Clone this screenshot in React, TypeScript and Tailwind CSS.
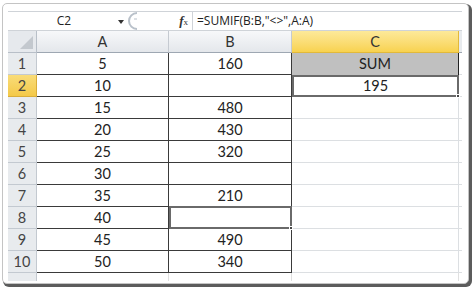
import React from "react";

const colA = ["5", "10", "15", "20", "25", "30", "35", "40", "45", "50"];
const colB = ["160", "", "480", "430", "320", "", "210", "", "490", "340"];

const cellFont = { fontFamily: "Lato, 'Open Sans', sans-serif" };

const App: React.FC = () => {
  return (
    <div className="w-[474px] h-[287px] bg-white pl-[2px] pt-[3px]">
      <div className="w-[467px] h-[281px] bg-white border border-[#c4c4c4] rounded-[5px] shadow-[2px_2px_0_1px_#5c5c5c] pl-[5px] pt-[7px] overflow-hidden">
        {/* Formula bar */}
        <div
          className="flex h-[20px] w-[454px] border-t border-b border-[#cfd3d8] bg-white text-[12px] text-[#222]"
          style={{ fontFamily: "'Open Sans', 'Noto Sans', sans-serif" }}
        >
          <div className="relative w-[120px] flex items-center justify-center">
            <span className="-ml-[8px]">C2</span>
            <span className="absolute right-[4px] top-[8px] w-0 h-0 border-l-[3px] border-r-[3px] border-t-[4px] border-l-transparent border-r-transparent border-t-[#333]" />
          </div>
          <div className="w-[14px] flex items-center">
            <svg width="12" height="18" viewBox="0 0 12 18">
              <path d="M9 1 A8 8 0 0 0 9 17" fill="none" stroke="#b9c1ca" strokeWidth="2" />
              <line x1="6" y1="7" x2="9" y2="7" stroke="#b9c1ca" strokeWidth="1" />
            </svg>
          </div>
          <div className="w-[50px] flex items-center justify-end pr-[4px]">
            <span
              className="italic font-bold text-[13px] text-[#333]"
              style={{ fontFamily: "'Liberation Serif', serif" }}
            >
              f<span className="text-[9px] not-italic font-normal">x</span>
            </span>
          </div>
          <div className="flex-1 border-l border-[#cfd3d8] flex items-center pl-[4px]">
            =SUMIF(B:B,"&lt;&gt;",A:A)
          </div>
        </div>

        {/* Grid */}
        <div
          className="grid grid-cols-[29px_132px_123px_167px_3px] text-[14.5px] text-[#222]"
          style={cellFont}
        >
          {/* Header row */}
          <div className="h-[22px] bg-[#e6e9ed] border-r border-b border-[#b8bfc8] relative">
            <svg className="absolute right-[3px] bottom-[3px]" width="13" height="13" viewBox="0 0 13 13">
              <polygon points="13,0 13,13 0,13" fill="#c3c8ce" />
            </svg>
          </div>
          <div className="h-[22px] bg-gradient-to-b from-[#f7f8fa] to-[#e4e7eb] border-r border-b border-[#c5cad1] border-b-[#9ea7b2] flex items-center justify-center text-[#333]">
            A
          </div>
          <div className="h-[22px] bg-gradient-to-b from-[#f7f8fa] to-[#e4e7eb] border-r border-b border-[#c5cad1] border-b-[#9ea7b2] flex items-center justify-center text-[#333]">
            B
          </div>
          <div className="h-[22px] bg-gradient-to-b from-[#fde999] to-[#f8d24e] border-r border-b border-[#e2b93a] flex items-center justify-center text-[#333]">
            C
          </div>
          <div className="h-[22px] bg-[#e8ebee] border-b border-[#9ea7b2]" />

          {colA.map((a, i) => {
            const row = i + 1;
            const selectedRow = row === 2;
            return (
              <React.Fragment key={row}>
                <div
                  className={`h-[22px] border-r border-b flex items-center justify-center text-[#444] ${
                    selectedRow
                      ? "bg-gradient-to-b from-[#f9dc78] to-[#f4c947] border-[#d9ad3a]"
                      : "bg-[#e8ebee] border-[#c3c9d0]"
                  }`}
                >
                  {row}
                </div>
                <div className="h-[22px] border-r border-b border-[#3a3a3a] flex items-center justify-center">
                  {a}
                </div>
                {row === 8 ? (
                  <div className="-mt-[1px] h-[23px] border-2 border-[#6a6a6a] relative">
                    <span className="absolute -right-[3px] -bottom-[3px] w-[4px] h-[4px] bg-[#444] border border-white" />
                  </div>
                ) : (
                  <div className="h-[22px] border-r border-b border-[#3a3a3a] flex items-center justify-center">
                    {colB[i]}
                  </div>
                )}
                {row === 1 ? (
                  <div className="h-[22px] bg-[#c0c0c0] border-r border-[#222] flex items-center justify-center">
                    SUM
                  </div>
                ) : row === 2 ? (
                  <div className="h-[22px] border-2 border-[#6a6a6a] relative flex items-center justify-center">
                    195
                    <span className="absolute -right-[3px] -bottom-[3px] w-[4px] h-[4px] bg-[#444] border border-white" />
                  </div>
                ) : (
                  <div className="h-[22px] border-r border-b border-[#dcdfe2]" />
                )}
                <div className="h-[22px] border-b border-[#dcdfe2]" />
              </React.Fragment>
            );
          })}

          {/* Partial row */}
          <div className="h-[8px] bg-[#e8ebee] border-r border-[#c3c9d0]" />
          <div className="h-[8px] border-r border-[#e0e0e0]" />
          <div className="h-[8px] border-r border-[#e0e0e0]" />
          <div className="h-[8px] border-r border-[#e0e0e0]" />
          <div className="h-[8px]" />
        </div>
      </div>
    </div>
  );
};

export default App;
